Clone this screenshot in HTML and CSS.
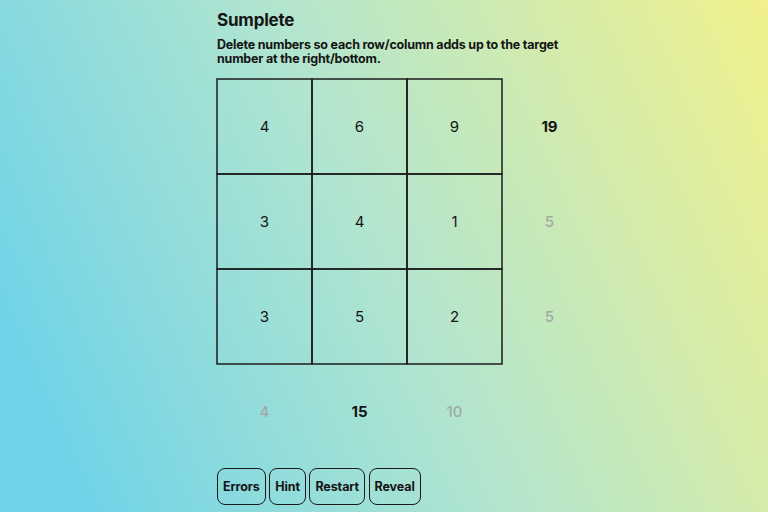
FILE: index.html
```html
<!DOCTYPE html>
<html>
<head>
<meta charset="utf-8">
<link rel="stylesheet" href="styles.css">
</head>
<body>
<main class="app">
  <h1 class="title">Sumplete</h1>
  <p class="desc">Delete numbers so each row/column adds up to the target number at the right/bottom.</p>
  <div class="board">
    <div class="cell">4</div><div class="cell">6</div><div class="cell">9</div><div class="target">19</div>
    <div class="cell">3</div><div class="cell">4</div><div class="cell">1</div><div class="target done">5</div>
    <div class="cell">3</div><div class="cell">5</div><div class="cell">2</div><div class="target done">5</div>
    <div class="target done">4</div><div class="target">15</div><div class="target done">10</div><div class="target"></div>
  </div>
  <div class="actions">
    <button class="btn">Errors</button>
    <button class="btn">Hint</button>
    <button class="btn">Restart</button>
    <button class="btn">Reveal</button>
  </div>
</main>
</body>
</html>
```

FILE: styles.css
```css
html, body {
  margin: 0;
  height: 100%;
}
body {
  background: linear-gradient(66deg, #6fd3e8 8%, #b2e5cf 50%, #f1f18c 100%);
  font-family: Inter, "Noto Sans", sans-serif;
  color: #151515;
  overflow: hidden;
}
.app {
  padding: 10px 0 0 217px;
}
.title {
  margin: 0;
  font-size: 17px;
  font-weight: 700;
  line-height: 20px;
  letter-spacing: -0.2px;
}
.desc {
  margin: 8px 0 0;
  width: 350px;
  font-size: 12.5px;
  font-weight: 700;
  line-height: 13.5px;
  letter-spacing: -0.2px;
}
.board {
  margin-top: 14px;
  display: grid;
  grid-template-columns: repeat(4, 95px);
  grid-template-rows: repeat(4, 95px);
}
.cell, .target {
  display: flex;
  align-items: center;
  justify-content: center;
  font-size: 15px;
}
.cell {
  box-shadow: 0 0 0 0.75px #1c1c1c, inset 0 0 0 0.75px #1c1c1c;
}
.target {
  font-weight: 700;
}
.target.done {
  color: #a3a9a3;
  font-weight: 500;
}
.actions {
  margin-top: 9px;
  display: flex;
  gap: 3.5px;
}
.btn {
  font-family: inherit;
  font-size: 12.5px;
  font-weight: 700;
  color: #151515;
  background: transparent;
  border: 1.5px solid #1a1a1a;
  border-radius: 8px;
  height: 37px;
  padding: 0 5px;
  letter-spacing: -0.1px;
}
```
